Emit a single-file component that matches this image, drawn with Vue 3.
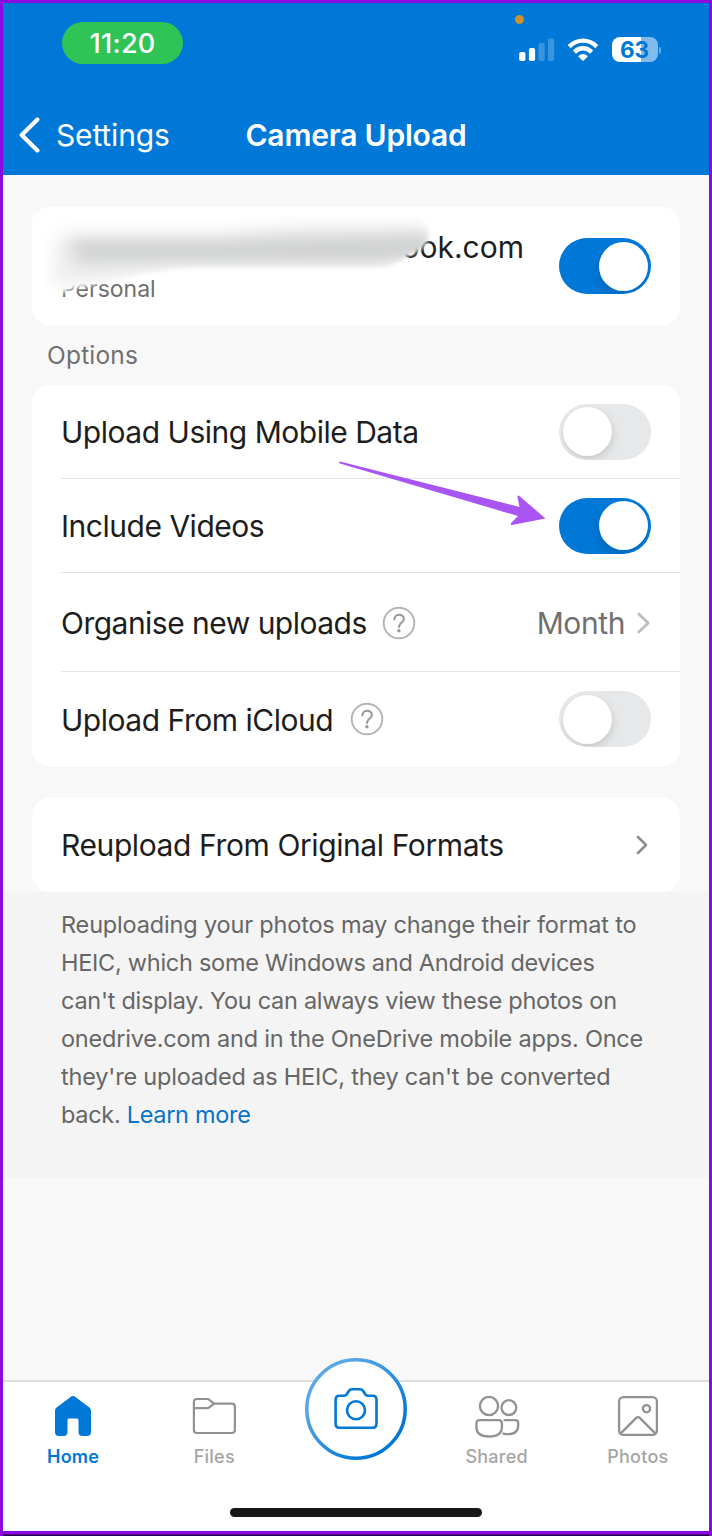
<script setup>
const options = [
  { label: 'Upload Using Mobile Data', kind: 'toggle', on: false, cls: 'r1' },
  { label: 'Include Videos', kind: 'toggle', on: true, cls: 'r2' },
  { label: 'Organise new uploads', kind: 'value', value: 'Month', help: true, cls: 'r3' },
  { label: 'Upload From iCloud', kind: 'toggle', on: false, help: true, cls: 'r4' },
]
const note = [
  'Reuploading your photos may change their format to',
  'HEIC, which some Windows and Android devices',
  "can't display. You can always view these photos on",
  'onedrive.com and in the OneDrive mobile apps. Once',
  "they're uploaded as HEIC, they can't be converted",
]
</script>

<template>
  <div class="phone">
    <header class="header">
      <div class="status">
        <div class="clock"><span>11:20</span></div>
        <div class="indicators">
          <i class="mic-dot"></i>
          <svg class="signal" width="36" height="24" viewBox="0 0 36 24">
            <rect x="0.2" y="14" width="6.2" height="9" rx="1.8" fill="#fff" />
            <rect x="9.9" y="10" width="6.2" height="13" rx="1.8" fill="#fff" />
            <rect x="19.5" y="5" width="6.2" height="18" rx="1.8" fill="#3a95de" />
            <rect x="29" y="0.5" width="6.2" height="22.5" rx="1.8" fill="#3a95de" />
          </svg>
          <svg class="wifi" width="32" height="24" viewBox="0 0 32 24">
            <g fill="none" stroke="#fff" stroke-width="4.4">
              <path d="M2.2 8.6C10 0.6 22 0.6 29.8 8.6" />
              <path d="M7.4 14.1C12.5 9 19.5 9 24.6 14.1" />
            </g>
            <path d="M11.1 18.2Q16 13.9 20.9 18.2L16.7 22.6Q16 23.3 15.3 22.6Z" fill="#fff" />
          </svg>
          <div class="battery"><span>63</span></div>
          <i class="battery-tip"></i>
        </div>
      </div>
      <div class="nav">
        <svg class="back" width="22" height="36" viewBox="0 0 22 36">
          <path d="M18.4 2.6L2.7 18L18.4 33.4" fill="none" stroke="#fff" stroke-width="4.2" stroke-linecap="round" stroke-linejoin="round" />
        </svg>
        <span class="back-label">Settings</span>
        <h1>Camera Upload</h1>
      </div>
    </header>

    <main>
      <section class="card account">
        <div class="identity">
          <div class="mail">outlook.com</div>
          <div class="plan">Personal</div>
          <svg class="smudge" width="440" height="110" viewBox="0 0 440 110">
            <defs>
              <filter id="soft" x="-20%" y="-80%" width="140%" height="260%"><feGaussianBlur stdDeviation="8" /></filter>
              <filter id="softer" x="-30%" y="-80%" width="160%" height="260%"><feGaussianBlur stdDeviation="9" /></filter>
              <filter id="edge" x="-10%" y="-20%" width="120%" height="140%"><feGaussianBlur stdDeviation="2.2" /></filter>
              <mask id="area" maskUnits="userSpaceOnUse" x="0" y="0" width="440" height="110">
                <path d="M0 8H385Q400 20 397 32Q392 44 376 49Q364 60 346 61H180Q140 61 110 68Q65 77 38 82Q30 88 4 92Z" fill="#fff" filter="url(#edge)" />
              </mask>
            </defs>
            <g mask="url(#area)">
              <rect width="440" height="110" fill="#fff" />
              <path d="M26 28H180L250 20H400V48L350 60H160L70 74L22 78Z" fill="#ebeced" filter="url(#softer)" />
              <path d="M38 34H190L260 31L400 28V47L350 54H46Z" fill="#cfd0d0" filter="url(#soft)" />
            </g>
          </svg>
        </div>
        <span class="toggle on"><i></i></span>
      </section>

      <h2>Options</h2>

      <section class="card options">
        <div v-for="o in options" :key="o.label" class="row" :class="o.cls">
          <span class="label">{{ o.label }}</span>
          <svg v-if="o.help" class="help" width="34" height="34" viewBox="0 0 34 34" fill="none">
            <circle cx="17" cy="17" r="15.3" stroke="#b3b3b3" stroke-width="1.9" />
            <path d="M12.3 13.6C12.3 7.1 21.9 7.2 21.9 12.9C21.9 16.9 16.9 16.7 16.9 21" stroke="#979797" stroke-width="2" stroke-linecap="round" />
            <circle cx="16.9" cy="24.8" r="1.7" fill="#979797" />
          </svg>
          <span class="space"></span>
          <template v-if="o.kind === 'value'">
            <span class="value">{{ o.value }}</span>
            <svg class="chev" width="16" height="24" viewBox="0 0 16 24">
              <path d="M3.8 3L13.2 12L3.8 21" fill="none" stroke="#bdbdbd" stroke-width="2.8" stroke-linecap="round" stroke-linejoin="round" />
            </svg>
          </template>
          <span v-else class="toggle" :class="{ on: o.on }"><i></i></span>
        </div>
        <svg class="arrow" width="210" height="76" viewBox="0 0 210 76">
          <path d="M2 0.6L181.5 46L179.5 36Q179.5 33.5 182 35.5L207.5 57.5L174 64Q171.5 64 174 61L180 55L2 2.6Q0 1 2 0.6Z" fill="#a955f3" />
        </svg>
      </section>

      <section class="card reupload">
        <span class="label">Reupload From Original Formats</span>
        <span class="space"></span>
        <svg class="chev" width="16" height="24" viewBox="0 0 16 24">
          <path d="M4 4L12 12L4 20" fill="none" stroke="#8e8e8e" stroke-width="2.6" stroke-linecap="round" stroke-linejoin="round" />
        </svg>
      </section>

      <section class="note">
        <p v-for="(line, i) in note" :key="i" :class="'n' + i">{{ line }}</p>
        <p class="n5">back. <a>Learn more</a></p>
      </section>
    </main>

    <nav class="tabs">
      <div class="tab active">
        <svg width="48" height="48" viewBox="0 0 48 48">
          <path d="M21.6 4.9Q24 3.2 26.4 4.9L40.4 15.5Q42 16.8 42 19V40Q42 44 38 44H33.5Q29.5 44 29.5 40V28Q29.5 26.5 28 26.5H20Q18.5 26.5 18.5 28V40Q18.5 44 14.5 44H10Q6 44 6 40V19Q6 16.8 7.6 15.5Z" fill="#0078d7" />
        </svg>
        <span>Home</span>
      </div>
      <div class="tab">
        <svg width="48" height="48" viewBox="0 0 48 48" fill="none" stroke="#929292" stroke-width="2.2" stroke-linejoin="round">
          <path d="M3.9 16V10Q3.9 7 6.9 7H17Q18.5 7 19.7 8.1L24.1 11.7H41.9Q44.9 11.7 44.9 14.7V38Q44.9 41 41.9 41H6.9Q3.9 41 3.9 38ZM3.9 16.2H17Q18.5 16.2 19.7 15.2L24.1 11.7" />
        </svg>
        <span>Files</span>
      </div>
      <div class="tab camera">
        <svg width="104" height="104" viewBox="0 0 104 104" fill="none">
          <defs>
            <linearGradient id="ring" x1="0" y1="0" x2="1" y2="1">
              <stop offset="0.22" stop-color="#5ba7e5" /><stop offset="0.8" stop-color="#0078d7" />
            </linearGradient>
          </defs>
          <circle cx="52" cy="52" r="49.2" fill="#fff" stroke="url(#ring)" stroke-width="3.5" />
          <g stroke="#0078d7" stroke-width="2.6" stroke-linejoin="round">
            <path d="M35.5 38.8H40Q42 38.8 43 37L45 33.8Q46 32.3 48 32.3H56Q58 32.3 59 33.8L61 37Q62 38.8 64 38.8H68.5Q72.5 38.8 72.5 42.8V66.8Q72.5 70.8 68.5 70.8H35.5Q31.6 70.8 31.6 66.8V42.8Q31.6 38.8 35.5 38.8Z" />
            <circle cx="52" cy="53.3" r="9" />
          </g>
        </svg>
      </div>
      <div class="tab">
        <svg width="48" height="48" viewBox="0.8 0 48 48" fill="none" stroke="#929292" stroke-width="2.3" stroke-linecap="round" stroke-linejoin="round">
          <circle cx="16.8" cy="14" r="9.1" /><circle cx="36.7" cy="15.6" r="7.4" />
          <path d="M7.4 28.2H26.2Q29.7 28.2 29.7 31.7V35Q29.7 44.5 16.9 44.5Q4.2 44.5 4.2 35V31.7Q4.2 28.2 7.4 28.2Z" />
          <path d="M32.3 28.2H43Q46 28.2 46 31.2V33.5Q46 42.2 35.4 42.2Q33.4 42.2 31.2 41.6" />
        </svg>
        <span>Shared</span>
      </div>
      <div class="tab">
        <svg width="48" height="48" viewBox="0 0 48 48" fill="none" stroke="#929292" stroke-width="2.3" stroke-linejoin="round">
          <rect x="5.1" y="5.1" width="37.8" height="37.8" rx="4.4" />
          <circle cx="32.5" cy="16.7" r="3.6" />
          <path d="M6.5 41.6L22 26.1Q24 24.1 26 26.1L41.5 41.6" />
        </svg>
        <span>Photos</span>
      </div>
      <i class="home-bar"></i>
    </nav>
    <i class="foot-edge"></i>
  </div>
</template>

<style>
body { margin: 0; background: #8a0be0; }
</style>

<style scoped>
.phone {
  box-sizing: border-box; width: 712px; height: 1536px; overflow: hidden;
  border: 3px solid #8a0be0; border-bottom: 0;
  display: flex; flex-direction: column; background: #f8f8f8; color: #1d1d1d;
  font-family: Inter, "Liberation Sans", sans-serif; white-space: nowrap;
}
.header { height: 172px; background: #0078d7; color: #fff; flex: none; }
.status { height: 92px; display: flex; justify-content: space-between; }
.clock {
  width: 121px; height: 42px; margin: 19px 0 0 59px; border-radius: 21px; background: #30c457;
  text-align: center; font-size: 27px; line-height: 44px; font-weight: 500; letter-spacing: .3px;
}
.indicators { position: relative; display: flex; margin: 35px 48px 0 0; height: 26px; }
.mic-dot { position: absolute; left: -4px; top: -23px; width: 9px; height: 9px; border-radius: 50%; background: #cd902c; }
.signal { margin-right: 12.5px; }
.wifi { margin-right: 12.5px; }
.battery {
  width: 46px; height: 25px; margin-top: -1px; border-radius: 8px; color: #0078d7;
  background: linear-gradient(90deg, #fff 62%, #80bbeb 62%);
  text-align: center; font-size: 22.5px; font-weight: 650; line-height: 25px;
}
.battery-tip { width: 2.5px; height: 7px; margin: 9px 0 0 1px; border-radius: 0 4px 4px 0; background: #66ade7; }
.nav { position: relative; height: 80px; display: flex; align-items: center; }
.back { margin: 0 15px 1px 16px; }
.back-label { font-size: 30px; line-height: 40px; letter-spacing: -.15px; }
h1 { position: absolute; left: 0; right: 0; top: 20px; margin: 0; text-align: center; font-size: 30px; line-height: 40px; font-weight: 600; letter-spacing: -.2px; }
main { height: 1205px; flex: none; }
.card { margin: 0 29px; background: #fff; border-radius: 18px; }
.account { height: 118px; margin-top: 32px; display: flex; justify-content: space-between; box-sizing: border-box; padding-right: 29px; align-items: center; }
.identity { position: relative; width: 492px; height: 118px; }
.mail { padding-top: 20px; text-align: right; font-size: 30px; line-height: 40px; }
.plan { margin: 10px 0 0 29px; font-size: 23px; line-height: 24px; color: #6e6e6e; }
.smudge { position: absolute; left: 0; top: 0; }
.toggle { width: 92px; height: 56px; border-radius: 28px; background: #e7e8e9; display: flex; align-items: center; overflow: hidden; }
.toggle i { width: 49px; height: 49px; margin-left: 3.5px; border-radius: 50%; background: #fff; box-shadow: 2px 4px 8px rgba(0, 0, 0, .1), 0 1px 3px rgba(0, 0, 0, .06); }
.toggle.on { background: #0078d7; }
.toggle.on i { margin-left: 39.5px; box-shadow: -3px 5px 7px rgba(0, 0, 0, .1); }
h2 { margin: 16px 0 0 44px; font-size: 24.5px; line-height: 28px; font-weight: 400; color: #707070; letter-spacing: .2px; }
.options { position: relative; margin-top: 16px; height: 381px; }
.row { height: 94px; margin-left: 29px; padding-right: 29px; box-sizing: border-box; display: flex; align-items: center; border-bottom: 1px solid #e4e4e4; }
.r3 { height: 99px; padding-top: 1px; }
.r4 { border: 0; }
.label { font-size: 30px; line-height: 40px; letter-spacing: -.48px; padding-top: 1px; }
.r3 .label { letter-spacing: -.52px; }
.reupload .label { letter-spacing: -.4px; padding-top: 0; }
.help { margin-left: 15px; }
.r4 .help { margin-left: 17px; }
.space { flex: 1; }
.value { font-size: 30px; line-height: 40px; color: #707070; margin-right: 10px; letter-spacing: -.4px; padding-top: 1px; }
.chev { flex: none; }
.arrow { position: absolute; left: 306px; top: 76px; }
.reupload { height: 94px; box-sizing: border-box; margin-top: 32px; padding: 0 30px 0 29px; display: flex; align-items: center; }
.note { height: 286px; box-sizing: border-box; padding: 14px 0 0 58px; background: #f4f4f4; color: #666; }
.note p { margin: 0; font-size: 23.5px; line-height: 38px; letter-spacing: -.22px; }
.note .n0 { letter-spacing: -.17px; }
.note .n1 { letter-spacing: -.27px; }
.note .n2 { letter-spacing: -.27px; }
.note .n4 { letter-spacing: -.19px; }
.note .n5 { letter-spacing: -.31px; }
.note a { color: #0873c6; }
.tabs { position: relative; height: 149px; flex: none; display: grid; grid-template-columns: repeat(5, 141.2px); background: #fff; border-top: 2px solid #dedede; }
.tab { display: flex; flex-direction: column; align-items: center; padding: 10px 1px 0 0; font-size: 18px; line-height: 24px; font-weight: 500; color: #a5a5a5; letter-spacing: .25px; }
.tab span { margin-top: 5px; }
.tab.active { color: #0078d7; font-weight: 600; }
.tab.camera { padding: 0; }
.camera svg { margin-top: -25.5px; }
.home-bar { position: absolute; left: 227px; top: 126px; width: 252px; height: 9px; border-radius: 5px; background: #171717; }
.foot-edge { flex: none; height: 7px; background: linear-gradient(#fff 0 0.5px, #8a0be0 0.5px 3px, #25034a 4px); }
</style>
